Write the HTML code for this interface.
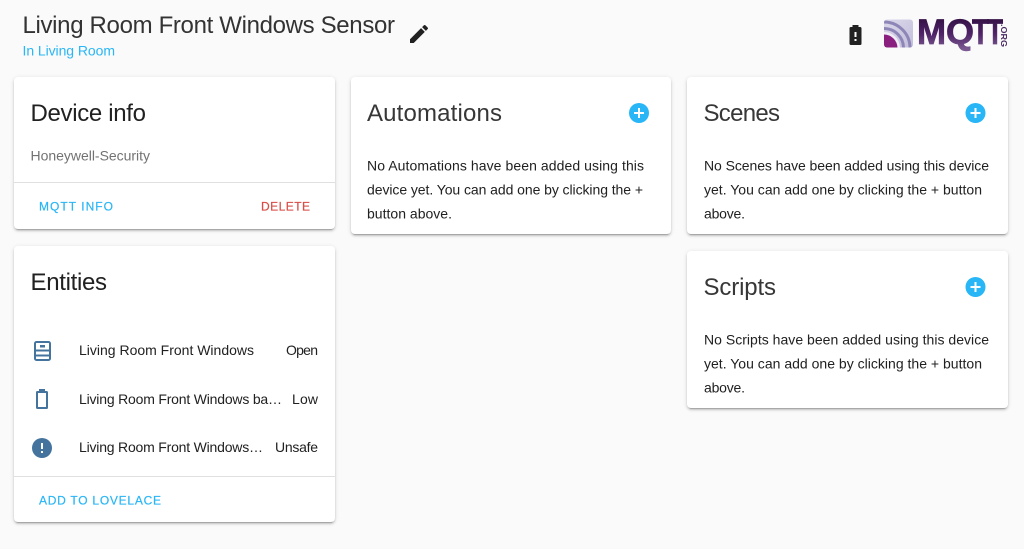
<!DOCTYPE html>
<html lang="en"><head><meta charset="utf-8"><title>Living Room Front Windows Sensor</title>
<style>
html,body{margin:0;padding:0;width:1024px;height:549px;overflow:hidden;background:#fafafa}
.c{position:absolute;background:#fff;border-radius:4px;box-shadow:0 2px 2px 0 rgba(0,0,0,.14),0 1px 5px 0 rgba(0,0,0,.12),0 3px 1px -2px rgba(0,0,0,.2)}
.d{position:absolute;height:1px;background:#e0e0e0}
svg.o{position:absolute;left:0;top:0}
text{font-family:"Liberation Sans",sans-serif}
.h{font-size:24px;fill:#212121}
.b{font-size:14px;fill:#212121}
.a{font-size:12px;font-weight:400;stroke-width:.2px}
.m{font-size:35.6px;font-weight:700;fill:url(#g);stroke:url(#g);stroke-width:.8px}
</style></head><body>
<div class="c" style="left:14px;top:77px;width:321px;height:152px"></div>
<div class="d" style="left:14px;top:182px;width:321px"></div>
<div class="c" style="left:14px;top:246px;width:321px;height:276px"></div>
<div class="d" style="left:14px;top:476px;width:321px"></div>
<div class="c" style="left:351px;top:77px;width:320px;height:157px"></div>
<div class="c" style="left:687px;top:77px;width:321px;height:157px"></div>
<div class="c" style="left:687px;top:251px;width:321px;height:156.5px"></div>
<svg class="o" width="1024" height="549" viewBox="0 0 1024 549" xmlns="http://www.w3.org/2000/svg">
<defs>
<linearGradient id="g" gradientUnits="userSpaceOnUse" x1="0" y1="19" x2="0" y2="49"><stop offset="0" stop-color="#351247"/><stop offset=".5" stop-color="#4f2468"/><stop offset="1" stop-color="#7a5a90"/></linearGradient>
<linearGradient id="s" x1="0" y1="0" x2="1" y2="1"><stop offset="0" stop-color="#dcd8ea"/><stop offset="1" stop-color="#c3bedc"/></linearGradient>
<clipPath id="q"><rect x="884" y="19.5" width="29" height="28" rx="3"/></clipPath>
</defs>
<text x="22.5" y="33" font-size="24" fill="#333" textLength="372.5" lengthAdjust="spacing">Living Room Front Windows Sensor</text>
<text x="22.5" y="55.5" font-size="14" fill="#29b6f6" textLength="92.5" lengthAdjust="spacing">In Living Room</text>
<path transform="translate(407,22)" fill="#212121" d="M20.71,7.04C21.1,6.65 21.1,6 20.71,5.63L18.37,3.29C18,2.9 17.35,2.9 16.96,3.29L15.12,5.12L18.87,8.87M3,17.25V21H6.75L17.81,9.93L14.06,6.18L3,17.25Z"/>
<path transform="translate(843.5,23)" fill="#212121" d="M13,14H11V9H13M13,18H11V16H13M16.67,4H15V2H9V4H7.33A1.33,1.33 0 0,0 6,5.33V20.67C6,21.4 6.6,22 7.33,22H16.67A1.33,1.33 0 0,0 18,20.67V5.33C18,4.6 17.4,4 16.67,4Z"/>
<g clip-path="url(#q)">
<rect x="884" y="19.5" width="29" height="28" fill="url(#s)"/>
<g fill="none" stroke="#8f86b8" stroke-width="3">
<circle cx="884" cy="48" r="26"/><circle cx="884" cy="48" r="19.5"/>
</g>
<circle cx="884" cy="48" r="16" fill="#f0eef6"/>
<circle cx="884" cy="48" r="13.5" fill="#8a1f80"/>
</g>
<text x="917" y="44" class="m" textLength="29" lengthAdjust="spacingAndGlyphs">M</text>
<text x="946" y="44" class="m" textLength="28" lengthAdjust="spacingAndGlyphs">Q</text>
<text x="972" y="44" class="m" textLength="17" lengthAdjust="spacingAndGlyphs">T</text>
<text x="987" y="44" class="m" textLength="16" lengthAdjust="spacingAndGlyphs">T</text>
<text transform="translate(1001,24) rotate(90)" font-size="8.5" font-weight="700" fill="#4a2a63" textLength="23" lengthAdjust="spacingAndGlyphs">.ORG</text>

<text x="30.5" y="121" class="h" textLength="115.5">Device info</text>
<text x="30.5" y="160.5" font-size="14" fill="#727272" textLength="119.5">Honeywell-Security</text>
<text x="39" y="210.5" class="a" fill="#29b6f6" stroke="#29b6f6" textLength="74">MQTT INFO</text>
<text x="261" y="210.5" class="a" fill="#d84c47" stroke="#d84c47" textLength="49">DELETE</text>

<text x="30.5" y="290" class="h" textLength="76.5">Entities</text>
<g fill="none" stroke="#44739e" stroke-width="2">
<rect x="35" y="342" width="15" height="18" rx="1.5"/>
<path d="M35,350.5H50M35,355.5H50"/>
</g>
<rect x="40" y="345" width="5" height="2.5" fill="#44739e"/>
<path transform="translate(30,387)" fill="#44739e" d="M16,20H8V6H16M16.67,4H15V2H9V4H7.33A1.33,1.33 0 0,0 6,5.33V20.67C6,21.4 6.6,22 7.33,22H16.67A1.33,1.33 0 0,0 18,20.67V5.33C18,4.6 17.4,4 16.67,4Z"/>
<path transform="translate(30,436)" fill="#44739e" d="M13,13H11V7H13M13,17H11V15H13M12,2A10,10 0 0,0 2,12A10,10 0 0,0 12,22A10,10 0 0,0 22,12A10,10 0 0,0 12,2Z"/>
<text x="79" y="355" class="b" textLength="175">Living Room Front Windows</text>
<text x="286" y="355" class="b" textLength="32">Open</text>
<text x="79" y="404" class="b" textLength="203">Living Room Front Windows ba…</text>
<text x="292" y="404" class="b" textLength="26">Low</text>
<text x="79" y="452" class="b" textLength="184">Living Room Front Windows…</text>
<text x="275" y="452" class="b" textLength="43">Unsafe</text>
<text x="39" y="504.5" class="a" fill="#29b6f6" stroke="#29b6f6" textLength="122">ADD TO LOVELACE</text>

<text x="367" y="121" class="h" fill-opacity=".9" textLength="135">Automations</text>
<path transform="translate(627,101)" fill="#29b6f6" d="M17,13H13V17H11V13H7V11H11V7H13V11H17M12,2A10,10 0 0,0 2,12A10,10 0 0,0 12,22A10,10 0 0,0 22,12A10,10 0 0,0 12,2Z"/>
<text x="367" y="170.5" class="b" textLength="277">No Automations have been added using this</text>
<text x="367" y="194.5" class="b" textLength="276">device yet. You can add one by clicking the +</text>
<text x="367" y="218.5" class="b" textLength="85">button above.</text>

<text x="703.5" y="121" class="h" fill-opacity=".9" textLength="76.5">Scenes</text>
<path transform="translate(963.5,101)" fill="#29b6f6" d="M17,13H13V17H11V13H7V11H11V7H13V11H17M12,2A10,10 0 0,0 2,12A10,10 0 0,0 12,22A10,10 0 0,0 22,12A10,10 0 0,0 12,2Z"/>
<text x="704" y="170.5" class="b" textLength="285">No Scenes have been added using this device</text>
<text x="704" y="194.5" class="b" textLength="278">yet. You can add one by clicking the + button</text>
<text x="704" y="218.5" class="b" textLength="41">above.</text>

<text x="703.5" y="295" class="h" fill-opacity=".9" textLength="72.5">Scripts</text>
<path transform="translate(963.5,275)" fill="#29b6f6" d="M17,13H13V17H11V13H7V11H11V7H13V11H17M12,2A10,10 0 0,0 2,12A10,10 0 0,0 12,22A10,10 0 0,0 22,12A10,10 0 0,0 12,2Z"/>
<text x="704" y="344.5" class="b" textLength="285">No Scripts have been added using this device</text>
<text x="704" y="368.5" class="b" textLength="278">yet. You can add one by clicking the + button</text>
<text x="704" y="392.5" class="b" textLength="41">above.</text>
</svg>
</body></html>
